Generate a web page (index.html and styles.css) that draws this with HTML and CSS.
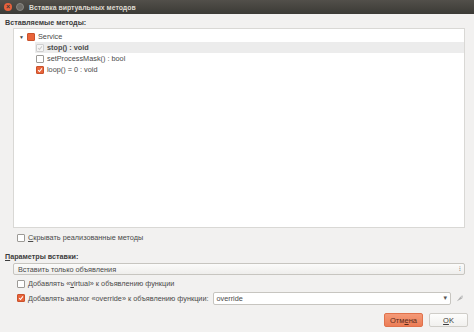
FILE: index.html
```html
<!DOCTYPE html>
<html lang="ru">
<head>
  <meta charset="UTF-8">
  <title>Вставка виртуальных методов</title>
  <link rel="stylesheet" href="styles.css">
</head>
<body>
  <div class="window">
    <div class="titlebar">
      <span class="wbtn close">×</span>
      <span class="wbtn min"></span>
      <span class="title">Вставка виртуальных методов</span>
    </div>

    <div class="content">
      <div class="label">Вставляемые методы:</div>
      <div class="tree">
        <div class="row">
          <span class="arrow">▼</span>
          <span class="cb part"></span>
          <span>Service</span>
        </div>
        <div class="row child selected">
          <span class="cb disabled"><svg viewBox="0 0 8 8"><path d="M1.5 4.2 L3.3 6 L6.6 1.8" fill="none" stroke="#c9c9c9" stroke-width="1.4"/></svg></span>
          <span class="bold">stop() : void</span>
        </div>
        <div class="row child">
          <span class="cb"></span>
          <span>setProcessMask() : bool</span>
        </div>
        <div class="row child">
          <span class="cb on"><svg viewBox="0 0 8 8"><path d="M1.5 4.2 L3.3 6 L6.6 1.8" fill="none" stroke="#fff" stroke-width="1.4"/></svg></span>
          <span>loop() = 0 : void</span>
        </div>
      </div>

      <div class="check hide">
        <span class="cb"></span>
        <span><u>С</u>крывать реализованные методы</span>
      </div>

      <div class="label params"><u>П</u>араметры вставки:</div>
      <div class="combo">
        <span>Вставить только объявления</span>
        <span class="spin">⁝</span>
      </div>

      <div class="check">
        <span class="cb"></span>
        <span>Добавлять «<u>v</u>irtual» к объявлению функции</span>
      </div>
      <div class="check override">
        <span class="cb on"><svg viewBox="0 0 8 8"><path d="M1.5 4.2 L3.3 6 L6.6 1.8" fill="none" stroke="#fff" stroke-width="1.4"/></svg></span>
        <span class="nowrap">Добавлять аналог «override» к объявлению функции:</span>
        <div class="input">
          <span>override</span>
          <span class="drop">▾</span>
        </div>
        <svg class="clear" viewBox="0 0 10 10"><path d="M2 8 L6 3 L8 5 Z" fill="#b0b0b0"/><path d="M6 3 L8 1 L9 3 L8 5" fill="#c8c8c8"/></svg>
      </div>

      <div class="buttons">
        <button class="btn cancel">Отм<u>е</u>на</button>
        <button class="btn ok"><u>O</u>K</button>
      </div>
    </div>
  </div>
</body>
</html>
```

FILE: styles.css
```css
body {
  margin: 0;
  font-family: "Liberation Sans", "DejaVu Sans", sans-serif;
  font-size: 7.3px;
  color: #4a4a4a;
  background-color: #f2f1f0;
}

.window {
  width: 474px;
  height: 332px;
  overflow: hidden;
}

.titlebar {
  height: 14px;
  background: linear-gradient(#524f4a, #3b3a36);
  display: flex;
  align-items: center;
  padding-left: 4px;
  box-sizing: border-box;
}

.wbtn {
  width: 8px;
  height: 8px;
  border-radius: 50%;
  margin-right: 4px;
  box-sizing: border-box;
}

.wbtn.close {
  background: #e8613c;
  color: #3c3a36;
  font-size: 7px;
  line-height: 8px;
  text-align: center;
  font-weight: bold;
}

.wbtn.min {
  background: #6d6b66;
  border: 1px solid #8a8883;
}

.title {
  margin-left: 1px;
  color: #dfdbd2;
  font-weight: bold;
  font-size: 6.9px;
}

.content {
  padding: 3px 9px 0 5px;
}

.label {
  font-weight: bold;
  font-size: 7.2px;
  color: #3c3c3c;
  height: 11px;
  line-height: 11px;
}

.tree {
  margin-left: 8px;
  height: 200px;
  background: #fff;
  border: 1px solid #d9d8d5;
  padding-top: 2px;
  box-sizing: border-box;
}

.row {
  display: flex;
  align-items: center;
  height: 11px;
  padding-left: 5px;
}

.row.child {
  padding-left: 22px;
}

.row.selected {
  background: #ececec;
  margin-left: 21px;
  padding-left: 1px;
}

.arrow {
  font-size: 5px;
  width: 8px;
  color: #444;
}

.bold {
  font-weight: bold;
}

.nowrap {
  white-space: nowrap;
}

.cb {
  width: 6px;
  height: 6px;
  border: 1px solid #9c9a96;
  border-radius: 1px;
  background: #fff;
  margin-right: 3px;
  display: inline-flex;
  flex-shrink: 0;
}

.cb svg {
  width: 6px;
  height: 6px;
}

.cb.on,
.cb.part {
  background: #e9643a;
  border-color: #c9522c;
}

.cb.disabled {
  border-color: #cfcfcf;
  background: #f5f5f5;
}

.check {
  display: flex;
  align-items: center;
  height: 13px;
  padding-left: 12px;
}

.hide {
  margin-top: 3px;
}

.params {
  margin-top: 7px;
}

.combo {
  margin-left: 8px;
  margin-top: 1px;
  height: 12px;
  border: 1px solid #c7c5c0;
  border-radius: 2px;
  background: linear-gradient(#fbfbfa, #efeeec);
  display: flex;
  align-items: center;
  justify-content: space-between;
  padding: 0 3px 0 4px;
  box-sizing: border-box;
  margin-bottom: 2px;
}

.spin {
  font-size: 7px;
  color: #555;
}

.override {
  margin-top: 1px;
  height: 14px;
}

.input {
  margin-left: 4px;
  flex: 1;
  height: 13px;
  border: 1px solid #c7c5c0;
  border-radius: 2px;
  background: #fff;
  display: flex;
  align-items: center;
  justify-content: space-between;
  padding: 0 3px;
  box-sizing: border-box;
}

.drop {
  font-size: 7px;
  color: #555;
}

.clear {
  width: 9px;
  height: 9px;
  margin-left: 4px;
  margin-right: 1px;
}

.buttons {
  display: flex;
  justify-content: flex-end;
  gap: 6px;
  margin-top: 8px;
  margin-right: -3px;
}

.btn {
  font-family: inherit;
  font-size: 7.5px;
  width: 39px;
  height: 14px;
  padding: 0;
  border-radius: 2px;
  cursor: pointer;
}

.cancel {
  background: linear-gradient(#f49a78, #ec7d56);
  border: 1px solid #e0724c;
  color: #5a2a1a;
}

.ok {
  background: linear-gradient(#fdfdfc, #f1f0ee);
  border: 1px solid #cfcdc8;
  color: #3c3c3c;
}
```
